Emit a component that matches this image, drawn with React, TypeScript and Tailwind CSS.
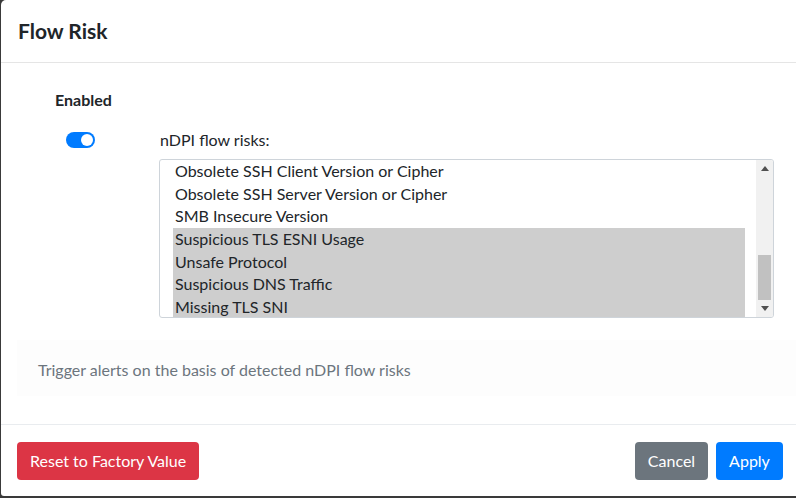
import { FC } from "react";

const risks = [
  { label: "Obsolete SSH Client Version or Cipher", selected: false },
  { label: "Obsolete SSH Server Version or Cipher", selected: false },
  { label: "SMB Insecure Version", selected: false },
  { label: "Suspicious TLS ESNI Usage", selected: true },
  { label: "Unsafe Protocol", selected: true },
  { label: "Suspicious DNS Traffic", selected: true },
  { label: "Missing TLS SNI", selected: true },
];

const Toggle: FC = () => (
  <div className="w-[29px] h-[16px] rounded-full bg-[#007bff] flex items-center justify-end px-[2px]">
    <div className="w-[12px] h-[12px] rounded-full bg-white" />
  </div>
);

const RiskList: FC = () => (
  <div className="w-[615px] h-[159px] border border-[#ced4da] rounded-[3px] bg-white flex overflow-hidden">
    <div className="flex-1 pl-[13px] flex flex-col">
      {risks.map((r) => (
        <div
          key={r.label}
          className={`h-[22.7px] shrink-0 pl-[2px] leading-[22.7px] text-[16px] text-[#212529] whitespace-nowrap ${
            r.selected ? "bg-[#cecece]" : ""
          }`}
        >
          {r.label}
        </div>
      ))}
    </div>
    <div className="w-[17px] ml-[11px] bg-[#f1f1f1] flex flex-col items-center">
      <div className="h-[17px] flex items-center justify-center">
        <svg width="8" height="5" viewBox="0 0 8 5">
          <path d="M0 5 L4 0 L8 5 Z" fill="#505050" />
        </svg>
      </div>
      <div className="flex-1 w-full flex flex-col px-[2px]">
        <div className="h-[78px]" />
        <div className="h-[45px] bg-[#c1c1c1]" />
      </div>
      <div className="h-[17px] flex items-center justify-center">
        <svg width="8" height="5" viewBox="0 0 8 5">
          <path d="M0 0 L4 5 L8 0 Z" fill="#505050" />
        </svg>
      </div>
    </div>
  </div>
);

export default function App() {
  return (
    <div
      className="w-[796px] h-[498px] bg-[#3a3a3a] overflow-hidden"
      style={{ fontFamily: "Lato, 'Noto Sans', sans-serif" }}
    >
      <div className="ml-[1px] w-[820px] h-[496px] bg-white rounded-tl-[5px] rounded-bl-[3px] flex flex-col">
        <div className="h-[63px] border-b border-[#e5e5e5] px-[17px] flex items-center">
          <h5 className="text-[21px] font-bold text-[#212529]">Flow Risk</h5>
        </div>
        <div className="h-[362px] border-b border-[#e9ecef] flex flex-col">
          <div className="pl-[54px] pt-[26px] text-[16px] font-bold text-[#212529] leading-[22px]">Enabled</div>
          <div className="flex pt-[17px]">
            <div className="pl-[65px] w-[158px] pt-[4px]">
              <Toggle />
            </div>
            <div className="flex flex-col">
              <div className="text-[16px] text-[#212529] leading-[24px] pl-[1px] mb-[7px]">nDPI flow risks:</div>
              <RiskList />
            </div>
          </div>
          <div className="mx-[16px] mt-[22px] h-[56px] bg-[#fdfdfd] pl-[21px] pt-[4px] flex items-center text-[16px] text-[#6c757d]">
            Trigger alerts on the basis of detected nDPI flow risks
          </div>
        </div>
        <div className="flex-1 flex items-center px-[16px] w-[796px]">
          <button className="h-[38px] px-[13px] rounded-[4px] bg-[#dc3545] text-white text-[16px]">
            Reset to Factory Value
          </button>
          <div className="ml-auto flex gap-[8px] mr-[-2px]">
            <button className="h-[38px] w-[73px] rounded-[4px] bg-[#6c757d] text-white text-[16px]">Cancel</button>
            <button className="h-[38px] w-[67px] rounded-[4px] bg-[#007bff] text-white text-[16px]">Apply</button>
          </div>
        </div>
      </div>
    </div>
  );
}
